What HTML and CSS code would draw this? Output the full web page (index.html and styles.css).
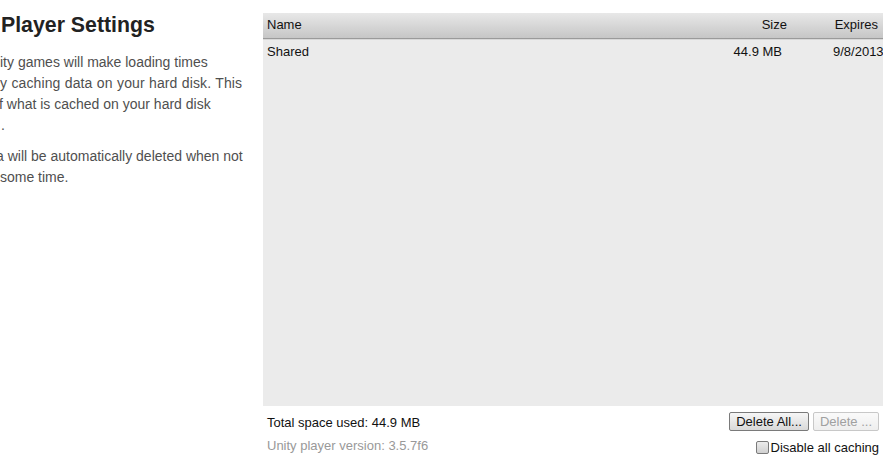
FILE: index.html
```html
<!DOCTYPE html>
<html>
<head>
<meta charset="utf-8">
<link rel="stylesheet" href="styles.css">
</head>
<body>
<div class="page">
  <div class="intro">
    <h1 class="title">Player Settings</h1>
    <p class="para">
      <span class="line l1">ity games will make loading times</span>
      <span class="line l2">y caching data on your hard disk. This</span>
      <span class="line l3">f what is cached on your hard disk</span>
      <span class="line l4">.</span>
    </p>
    <p class="para">
      <span class="line l5">a will be automatically deleted when not</span>
      <span class="line l6">some time.</span>
    </p>
  </div>
  <div class="main">
    <div class="panel">
      <div class="grid head">
        <div class="cell c-name">Name</div>
        <div class="cell c-size">Size</div>
        <div class="cell c-exp">Expires</div>
      </div>
      <div class="grid row">
        <div class="cell c-name">Shared</div>
        <div class="cell c-size">44.9 MB</div>
        <div class="cell c-date">9/8/2013</div>
      </div>
    </div>
    <div class="footer">
      <div class="info">
        <div class="total">Total space used: 44.9 MB</div>
        <div class="version">Unity player version: 3.5.7f6</div>
      </div>
      <div class="controls">
        <div class="buttons">
          <button class="btn">Delete All...</button>
          <button class="btn disabled" disabled>Delete ...</button>
        </div>
        <label class="check"><span class="box"></span>Disable all caching</label>
      </div>
    </div>
  </div>
</div>
</body>
</html>
```
FILE: styles.css
```css
html, body {
  margin: 0;
  padding: 0;
  background: #ffffff;
}
body {
  font-family: "Liberation Sans", Arial, sans-serif;
  width: 889px;
  height: 467px;
  overflow: hidden;
}
.page {
  display: flex;
  height: 467px;
}
.intro {
  width: 263px;
  flex: none;
  overflow: hidden;
}
.title {
  margin: 12px 0 0 1px;
  font-size: 21.3px;
  font-weight: bold;
  color: #222222;
  line-height: 26px;
  white-space: nowrap;
}
.para {
  margin: 14px 0 0 0;
  font-size: 14px;
  line-height: 21px;
  color: #4f4f4f;
}
.para + .para {
  margin-top: 10px;
}
.line {
  display: block;
  white-space: nowrap;
}
.l1 { margin-left: 0; }
.l2 { margin-left: 0; letter-spacing: 0.1px; word-spacing: 0.4px; }
.l3 { margin-left: -1px; }
.l4 { margin-left: 1px; }
.l5 { margin-left: -4px; }
.l6 { margin-left: 0; }

.main {
  width: 620px;
  flex: none;
  padding-top: 13px;
  display: flex;
  flex-direction: column;
  font-size: 13px;
}
.panel {
  height: 393px;
  background: #ebebeb;
  overflow: hidden;
}
.grid {
  display: grid;
  grid-template-columns: 1fr 100px 96px;
}
.head {
  box-sizing: border-box;
  height: 26px;
  padding-bottom: 2px;
  background: linear-gradient(#e8e8e8, #c6c6c6);
  border-bottom: 1px solid #9a9a9a;
  box-shadow: 0 1px 0 #d8d8d8;
  align-items: center;
  color: #111111;
}
.row {
  height: 24px;
  align-items: center;
  color: #111111;
}
.cell {
  white-space: nowrap;
}
.c-name {
  padding-left: 4px;
}
.c-size {
  text-align: right;
}
.row .c-size { padding-right: 5px; }
.c-exp {
  text-align: right;
  padding-right: 5px;
}
.c-date {
  padding-left: 46px;
}

.footer {
  display: flex;
  justify-content: space-between;
  padding-top: 6px;
}
.info {
  padding-left: 4px;
  padding-top: 2px;
}
.total {
  color: #111111;
  line-height: 17px;
}
.version {
  color: #999999;
  margin-top: 6px;
  line-height: 17px;
}
.controls {
  display: flex;
  flex-direction: column;
  align-items: flex-end;
  padding-right: 4px;
}
.buttons {
  display: flex;
  gap: 4px;
}
.btn {
  font-family: "Liberation Sans", Arial, sans-serif;
  font-size: 13px;
  height: 19px;
  padding: 0 6px;
  border: 1px solid #7a7a7a;
  border-radius: 2px;
  background: linear-gradient(#f6f6f6, #d9d9d9);
  color: #111111;
  line-height: 17px;
}
.btn.disabled {
  border-color: #c8c8c8;
  background: linear-gradient(#fafafa, #eeeeee);
  color: #a0a0a0;
}
.check {
  display: flex;
  align-items: center;
  gap: 2px;
  margin-top: 9px;
  color: #111111;
  line-height: 15px;
}
.box {
  width: 11px;
  height: 11px;
  border: 1px solid #7a7a7a;
  border-radius: 2px;
  background: linear-gradient(#ececec, #d0d0d0);
}
```
